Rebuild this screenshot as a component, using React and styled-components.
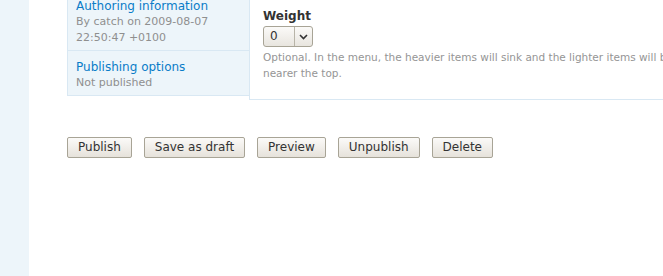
import React from 'react';
import styled, { createGlobalStyle } from 'styled-components';

const GlobalStyle = createGlobalStyle`
  html, body {
    margin: 0;
    padding: 0;
    background: #fff;
    font-family: "DejaVu Sans", Verdana, sans-serif;
    overflow: hidden;
  }
`;

const Page = styled.div`
  display: flex;
  height: 276px;
`;

const Sidebar = styled.div`
  width: 29px;
  flex: none;
  background: #edf5fa;
`;

const Main = styled.div`
  flex: 1;
  padding-left: 38px;
  min-width: 0;
`;

const VerticalTabs = styled.div`
  display: flex;
  margin-top: -11px;
`;

const TabList = styled.ul`
  list-style: none;
  margin: 0;
  padding: 0;
  width: 181px;
  flex: none;
  background: #edf5fa;
  border: 1px solid #d9e8f3;
  border-right: none;
  align-self: flex-start;
`;

const TabItem = styled.li`
  padding: 8px 8px 4px;
  border-top: ${p => (p.$first ? 'none' : '1px solid #d9e8f3')};
`;

const TabTitle = styled.a`
  display: block;
  color: #0a7cc8;
  font-size: 12px;
  line-height: 16px;
  text-decoration: none;
`;

const TabSummary = styled.div`
  color: #8f8f8f;
  font-size: 11px;
  line-height: 16px;
`;

const Pane = styled.div`
  flex: 1;
  min-width: 0;
  border-left: 1px solid #d9e8f3;
  border-bottom: 1px solid #d9e8f3;
  padding: 19px 14px 18px 13px;
  white-space: nowrap;
  overflow: hidden;
`;

const Label = styled.div`
  font-weight: bold;
  font-size: 12px;
  line-height: 16px;
  color: #333;
`;

const Select = styled.div`
  display: inline-flex;
  align-items: stretch;
  width: 48px;
  height: 19px;
  border: 1px solid #a8a496;
  border-radius: 3px;
  background: linear-gradient(#fbfaf8, #e8e5df);
  box-sizing: content-box;
  margin-top: 2px;
`;

const SelectValue = styled.span`
  flex: 1;
  font-size: 12px;
  line-height: 19px;
  padding-left: 6px;
  color: #333;
`;

const SelectArrow = styled.span`
  width: 17px;
  border-left: 1px solid #b8b4a8;
  display: flex;
  align-items: center;
  justify-content: center;
`;

const Description = styled.div`
  color: #959595;
  font-size: 10.5px;
  line-height: 16px;
  margin-top: 2px;
`;

const Actions = styled.div`
  display: flex;
  gap: 12px;
  margin-top: 37px;
`;

const Button = styled.button`
  font-family: "DejaVu Sans", Verdana, sans-serif;
  font-size: 12px;
  height: 21px;
  padding: 0 10px;
  color: #333;
  background: linear-gradient(#fbfaf8, #e6e2db);
  border: 1px solid #a8a496;
  border-radius: 2px;
  line-height: 19px;
`;

export default function App() {
  return (
    <>
      <GlobalStyle />
      <Page>
        <Sidebar />
        <Main>
          <VerticalTabs>
            <TabList>
              <TabItem $first>
                <TabTitle>Authoring information</TabTitle>
                <TabSummary>By catch on 2009-08-07<br />22:50:47 +0100</TabSummary>
              </TabItem>
              <TabItem>
                <TabTitle>Publishing options</TabTitle>
                <TabSummary>Not published</TabSummary>
              </TabItem>
            </TabList>
            <Pane>
              <Label>Weight</Label>
              <Select>
                <SelectValue>0</SelectValue>
                <SelectArrow>
                  <svg width="9" height="6" viewBox="0 0 9 6">
                    <path d="M1 1 L4.5 4.5 L8 1" fill="none" stroke="#333" strokeWidth="1.6" />
                  </svg>
                </SelectArrow>
              </Select>
              <Description>
                Optional. In the menu, the heavier items will sink and the lighter items will be positioned
                <br />
                nearer the top.
              </Description>
            </Pane>
          </VerticalTabs>
          <Actions>
            <Button>Publish</Button>
            <Button>Save as draft</Button>
            <Button>Preview</Button>
            <Button>Unpublish</Button>
            <Button>Delete</Button>
          </Actions>
        </Main>
      </Page>
    </>
  );
}
